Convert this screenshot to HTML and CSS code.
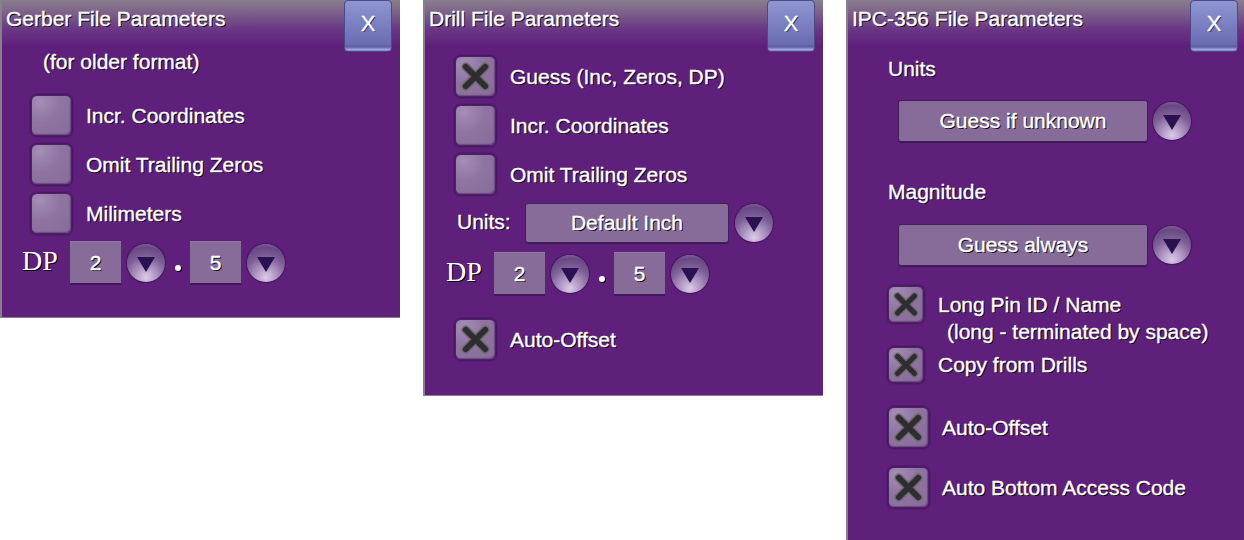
FILE: index.html
```html
<!DOCTYPE html>
<html lang="en">
<head>
    <meta charset="UTF-8">
    <meta name="viewport" content="width=device-width, initial-scale=1.0">
    <title>File Parameters</title>
    <link rel="stylesheet" href="styles.css">
</head>
<body>
    <div class="screen">
        <!-- Gerber -->
        <section class="panel panel-gerber">
            <header class="titlebar">
                <h1 class="title">Gerber File Parameters</h1>
                <button class="close">X</button>
            </header>
            <p class="note">(for older format)</p>
            <div class="options options-gerber">
                <label class="option"><span class="check"></span><span class="text">Incr. Coordinates</span></label>
                <label class="option"><span class="check"></span><span class="text">Omit Trailing Zeros</span></label>
                <label class="option"><span class="check"></span><span class="text">Milimeters</span></label>
            </div>
            <div class="dp-row dp-gerber">
                <span class="dp-label">DP</span>
                <span class="value">2</span>
                <span class="drop"></span>
                <span class="dot-cell"><span class="dot"></span></span>
                <span class="value">5</span>
                <span class="drop"></span>
            </div>
        </section>

        <!-- Drill -->
        <section class="panel panel-drill">
            <header class="titlebar">
                <h1 class="title">Drill File Parameters</h1>
                <button class="close">X</button>
            </header>
            <div class="options options-drill">
                <label class="option"><span class="check checked"><svg viewBox="0 0 40 40"><path class="x-edge" d="M10 10 30 30M30 10 10 30"/><path class="x-core" d="M10 10 30 30M30 10 10 30"/></svg></span><span class="text">Guess (Inc, Zeros, DP)</span></label>
                <label class="option"><span class="check"></span><span class="text">Incr. Coordinates</span></label>
                <label class="option"><span class="check"></span><span class="text">Omit Trailing Zeros</span></label>
            </div>
            <div class="units-row">
                <span class="units-label">Units:</span>
                <span class="combo combo-drill">Default Inch</span>
                <span class="drop"></span>
            </div>
            <div class="dp-row dp-drill">
                <span class="dp-label">DP</span>
                <span class="value">2</span>
                <span class="drop"></span>
                <span class="dot-cell"><span class="dot"></span></span>
                <span class="value">5</span>
                <span class="drop"></span>
            </div>
            <div class="options options-drill-offset">
                <label class="option"><span class="check checked"><svg viewBox="0 0 40 40"><path class="x-edge" d="M10 10 30 30M30 10 10 30"/><path class="x-core" d="M10 10 30 30M30 10 10 30"/></svg></span><span class="text">Auto-Offset</span></label>
            </div>
        </section>

        <!-- IPC-356 -->
        <section class="panel panel-ipc">
            <header class="titlebar">
                <h1 class="title">IPC-356 File Parameters</h1>
                <button class="close">X</button>
            </header>
            <div class="field-label label-units">Units</div>
            <div class="combo-row combo-row-units">
                <span class="combo combo-ipc">Guess if unknown</span>
                <span class="drop"></span>
            </div>
            <div class="field-label label-magnitude">Magnitude</div>
            <div class="combo-row combo-row-magnitude">
                <span class="combo combo-ipc">Guess always</span>
                <span class="drop"></span>
            </div>
            <label class="option option-small opt-longpin"><span class="check checked"><svg viewBox="0 0 40 40"><path class="x-edge" d="M10 10 30 30M30 10 10 30"/><path class="x-core" d="M10 10 30 30M30 10 10 30"/></svg></span><span class="text">Long Pin ID / Name</span></label>
            <div class="sub-note">(long - terminated by space)</div>
            <label class="option option-small opt-copy"><span class="check checked"><svg viewBox="0 0 40 40"><path class="x-edge" d="M10 10 30 30M30 10 10 30"/><path class="x-core" d="M10 10 30 30M30 10 10 30"/></svg></span><span class="text">Copy from Drills</span></label>
            <label class="option option-big opt-offset"><span class="check checked"><svg viewBox="0 0 40 40"><path class="x-edge" d="M10 10 30 30M30 10 10 30"/><path class="x-core" d="M10 10 30 30M30 10 10 30"/></svg></span><span class="text">Auto-Offset</span></label>
            <label class="option option-big opt-bottom"><span class="check checked"><svg viewBox="0 0 40 40"><path class="x-edge" d="M10 10 30 30M30 10 10 30"/><path class="x-core" d="M10 10 30 30M30 10 10 30"/></svg></span><span class="text">Auto Bottom Access Code</span></label>
        </section>
    </div>
</body>
</html>
```

FILE: styles.css
```css
html,
body {
    margin: 0;
    padding: 0;
    background: #fff;
    overflow: hidden;
}

body {
    font-family: "Liberation Sans", Arial, sans-serif;
    color: #fff;
}

.screen {
    display: flex;
    align-items: flex-start;
    gap: 23px;
    width: 1244px;
    height: 540px;
    overflow: hidden;
}

.panel {
    flex: none;
    box-sizing: border-box;
    width: 400px;
    border-left: 2px solid #85808a;
    border-bottom: 1px solid #85808a;
    background: linear-gradient(#8a7f8e 0, #6a3584 30px, #5f207c 46px, #5f207c 100%);
    display: flex;
    flex-direction: column;
    align-items: flex-start;
}

.panel-gerber {
    height: 318px;
}

.panel-drill {
    height: 396px;
}

.panel-ipc {
    height: 560px;
}

/* title bar */
.titlebar {
    display: flex;
    justify-content: space-between;
    align-items: flex-start;
    width: 100%;
    height: 52px;
}

.title {
    margin: 0;
    padding: 7px 0 0 4px;
    font-size: 21px;
    line-height: 24px;
    font-weight: normal;
    -webkit-text-stroke: 0.35px #fff;
    text-shadow: 1px 1px 0 #000;
}

.close {
    box-sizing: border-box;
    width: 48px;
    height: 52px;
    margin-right: 8px;
    padding: 0 0 4px 0;
    border: 1px solid #4a4b86;
    border-radius: 4px;
    background: linear-gradient(#8f96d0 0, #7d83c4 40%, #6b6db3 85%, #5f5fa2 92%, #a2a6e0 97%, #7a7cc0 100%);
    color: #fff;
    font-family: "Liberation Sans", Arial, sans-serif;
    font-size: 22px;
    -webkit-text-stroke: 0.3px #fff;
    text-shadow: 1px 1px 0 #303060;
}

.text,
.note,
.field-label,
.sub-note,
.units-label,
.value,
.combo {
    font-size: 21px;
    -webkit-text-stroke: 0.35px #fff;
    text-shadow: 1px 1px 0 #000;
}

.note {
    margin: 0 0 0 41px;
    line-height: 20px;
}

/* checkboxes */
.options {
    display: flex;
    flex-direction: column;
    gap: 8px;
}

.option {
    display: flex;
    align-items: center;
    gap: 14px;
    height: 41px;
}

.check {
    box-sizing: border-box;
    width: 41px;
    height: 41px;
    flex: none;
    border: 1px solid #4b2464;
    border-radius: 6px;
    background: radial-gradient(circle at 20% 15%, #a48db6 0, #8f74a1 45%, #886c9b 100%);
    box-shadow: 0 0 2px 1px rgba(50, 10, 70, 0.6), inset -1px -1px 1px rgba(60, 20, 80, 0.4);
}

.check svg {
    display: block;
    width: 100%;
    height: 100%;
}

.x-edge {
    stroke: #6f6b70;
    stroke-width: 9;
    stroke-linecap: round;
    fill: none;
}

.x-core {
    stroke: #2e2d30;
    stroke-width: 6;
    stroke-linecap: round;
    fill: none;
}

.options-gerber {
    margin: 23px 0 0 29px;
}

.options-drill {
    margin: 4px 0 0 30px;
}

.options-drill-offset {
    margin: 23px 0 0 30px;
}

/* dp row */
.dp-row {
    display: flex;
    align-items: center;
    height: 44px;
}

.dp-gerber {
    margin: 7px 0 0 20px;
}

.dp-drill {
    margin: 9px 0 0 21px;
}

.dp-label {
    width: 48px;
    margin-top: -4px;
    font-family: "Liberation Serif", "Times New Roman", serif;
    font-size: 28px;
    line-height: 30px;
    text-shadow: 1px 1px 0 #000;
}

.value {
    box-sizing: border-box;
    width: 51px;
    height: 44px;
    line-height: 42px;
    text-align: center;
    background: #876b99;
    border-top: 1px solid #94799f;
    border-bottom: 2px solid #3e1858;
}

.drop {
    position: relative;
    flex: none;
    width: 38px;
    height: 38px;
    margin-left: 6px;
    border-radius: 50%;
    background: radial-gradient(circle at 50% 88%, #dccbe8 0, #b7a1ca 22%, #7e5f97 55%, #684883 78%, #9a84ae 100%);
    box-shadow: 0 0 1px 1px rgba(40, 10, 60, 0.5);
}

.drop::after {
    content: "";
    position: absolute;
    left: 10px;
    top: 13px;
    border-left: 9px solid transparent;
    border-right: 9px solid transparent;
    border-top: 15px solid #2b1150;
}

.dot-cell {
    display: flex;
    justify-content: center;
    width: 25px;
    padding-top: 10px;
}

.dot {
    width: 6px;
    height: 6px;
    border-radius: 50%;
    background: #fff;
    box-shadow: 1px 1px 0 #000;
}

/* combos */
.units-row,
.combo-row {
    display: flex;
    align-items: center;
}

.units-row {
    margin: 8px 0 0 32px;
    height: 40px;
}

.units-label {
    width: 68px;
    margin-top: -3px;
}

.combo {
    box-sizing: border-box;
    display: block;
    height: 40px;
    line-height: 38px;
    text-align: center;
    background: #876b99;
    border: 1px solid #41205a;
    border-radius: 3px;
    box-shadow: 0 1px 0 #3b1656;
}

.combo-drill {
    width: 204px;
}

.combo-ipc {
    width: 250px;
    height: 42px;
    line-height: 40px;
}

.combo-row .drop {
    margin-left: 5px;
}

.field-label {
    margin-left: 40px;
    line-height: 24px;
}

.label-units {
    margin-top: 5px;
}

.combo-row-units {
    margin: 19px 0 0 50px;
}

.label-magnitude {
    margin-top: 38px;
}

.combo-row-magnitude {
    margin: 20px 0 0 50px;
}

.option-small,
.option-big {
    margin-left: 40px;
}

.option-small {
    height: 37px;
}

.option-small .check {
    width: 36px;
    height: 37px;
}

.option-big .check {
    width: 41px;
    height: 41px;
}

.option-big {
    gap: 13px;
}

.opt-longpin {
    margin-top: 20px;
}

.sub-note {
    margin-left: 99px;
    line-height: 18px;
}

.opt-copy {
    margin-top: 6px;
    height: 36px;
}

.opt-copy .check {
    height: 36px;
}

.opt-offset {
    margin-top: 24px;
}

.opt-bottom {
    margin-top: 19px;
}
```
